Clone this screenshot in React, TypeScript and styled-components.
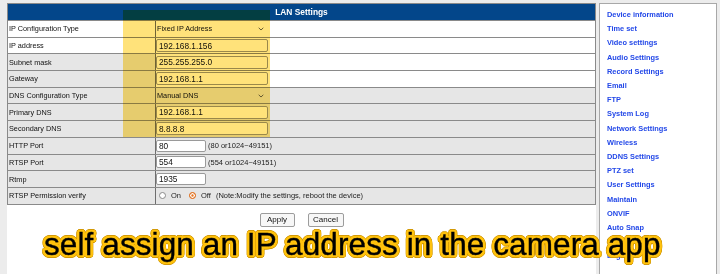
import React from "react";
import styled, { createGlobalStyle } from "styled-components";

const Global = createGlobalStyle`
  html, body { margin: 0; padding: 0; background: #ececec; }
  body {
    width: 720px; height: 274px; overflow: hidden;
    font-family: "Liberation Sans", Arial, sans-serif;
  }
  * { box-sizing: border-box; }
`;

const Page = styled.div`
  position: relative;
  display: flex;
  align-items: stretch;
  gap: 3px;
  padding: 3px 0 0 7px;
  height: 274px;
`;

const Main = styled.div`
  width: 589px;
  background: #fff;
  display: flex;
  flex-direction: column;
`;

const Table = styled.div`
  border: 1px solid #8a8a8a;
  display: flex;
  flex-direction: column;
`;

const Header = styled.div`
  height: 16px;
  background: #03468a;
  color: #fff;
  font-weight: bold;
  font-size: 8.4px;
  display: flex;
  align-items: center;
  justify-content: center;
`;

const Row = styled.div`
  height: 16.7px;
  border-top: 1px solid #8a8a8a;
  display: grid;
  grid-template-columns: 148px 1fr;
`;

const Label = styled.div<{ $gray?: boolean }>`
  background: ${(p) => (p.$gray ? "#e6e6e6" : "#fff")};
  border-right: 1px solid #6e6e6e;
  padding-left: 1px;
  font-size: 7.3px;
  color: #111;
  display: flex;
  align-items: center;
`;

const Value = styled.div<{ $gray?: boolean }>`
  background: ${(p) => (p.$gray ? "#e6e6e6" : "#fff")};
  display: flex;
  align-items: center;
  gap: 2px;
`;

const TextBox = styled.input<{ $small?: boolean }>`
  width: ${(p) => (p.$small ? "50px" : "112px")};
  height: ${(p) => (p.$small ? "12px" : "13px")};
  border: 1px solid #9a9a9a;
  border-radius: 2px;
  background: #fff;
  padding: 0 0 0 2px;
  margin: 0;
  font-family: "Liberation Sans", Arial, sans-serif;
  font-size: 8.3px;
  color: #111;
  outline: none;
`;

const SelectBox = styled.div`
  width: 112px;
  height: 13px;
  padding: 0 4px 0 1px;
  display: flex;
  align-items: center;
  justify-content: space-between;
  font-size: 7.3px;
  color: #111;
`;

const Hint = styled.span`
  font-size: 7.5px;
  color: #222;
  white-space: nowrap;
`;

const RadioGroup = styled.div`
  display: flex;
  align-items: center;
  padding-left: 3px;
  font-size: 7.5px;
  color: #222;
  white-space: nowrap;
`;

const Radio = styled.input`
  appearance: none;
  width: 7px;
  height: 7px;
  margin: 0 5px 0 0;
  border-radius: 50%;
  border: 1px solid #8a8a8a;
  background: #fff;
  &:checked {
    border-color: #e0701f;
    background: #e8731e;
    box-shadow: inset 0 0 0 1.3px #fff;
  }
`;

const RadioText = styled.span<{ $gap?: number }>`
  margin-right: ${(p) => p.$gap ?? 5}px;
`;

const Buttons = styled.div`
  display: flex;
  justify-content: center;
  gap: 13px;
  margin-top: 8px;
`;

const Button = styled.button<{ $w: number }>`
  width: ${(p) => p.$w}px;
  height: 14px;
  padding: 0;
  border: 1px solid #9c9c9c;
  border-radius: 2px;
  background: #f7f7f7;
  font-family: "Liberation Sans", Arial, sans-serif;
  font-size: 8px;
  color: #111;
`;

const Sidebar = styled.div`
  width: 118px;
  background: #fff;
  border: 1px solid #a8a8a8;
  border-bottom: none;
  padding: 4px 0 0 7px;
  display: flex;
  flex-direction: column;
`;

const NavLink = styled.a`
  display: block;
  line-height: 14.2px;
  font-size: 7.4px;
  font-weight: bold;
  color: #2348e8;
  text-decoration: none;
  white-space: nowrap;
`;

const Highlight = styled.div`
  position: absolute;
  left: 123px;
  top: 10px;
  width: 147px;
  height: 127px;
  background: #ffe27a;
  mix-blend-mode: multiply;
  pointer-events: none;
`;

const outline = (() => {
  const out: string[] = [];
  const n = 24;
  for (let i = 0; i < n; i++) {
    const a = (i / n) * Math.PI * 2;
    out.push(`${(Math.cos(a) * 2.4).toFixed(2)}px ${(Math.sin(a) * 2.4).toFixed(2)}px 0 #ffc20e`);
  }
  for (let i = 0; i < n; i++) {
    const a = (i / n) * Math.PI * 2;
    out.push(`${(Math.cos(a) * 3.1).toFixed(2)}px ${(Math.sin(a) * 3.1).toFixed(2)}px 0.5px #d39a08`);
  }
  return out.join(", ");
})();

const Caption = styled.div`
  position: absolute;
  left: 44px;
  top: 228.5px;
  font-family: "Liberation Sans", Arial, sans-serif;
  font-size: 31.5px;
  line-height: 31.5px;
  letter-spacing: 0.1px;
  color: #000;
  white-space: nowrap;
  -webkit-text-stroke: 0.35px #000;
  text-shadow: ${outline};
  pointer-events: none;
`;

const Chevron = () => (
  <svg width="6" height="4" viewBox="0 0 6 4">
    <path d="M0.7 0.8 L3 3 L5.3 0.8" fill="none" stroke="#555" strokeWidth="0.9" />
  </svg>
);

type RowSpec =
  | { label: string; lg?: boolean; vg?: boolean; kind: "select"; value: string }
  | { label: string; lg?: boolean; vg?: boolean; kind: "input"; value: string }
  | { label: string; lg?: boolean; vg?: boolean; kind: "port"; value: string; hint?: string }
  | { label: string; lg?: boolean; vg?: boolean; kind: "radio" };

const rows: RowSpec[] = [
  { label: "IP Configuration Type", kind: "select", value: "Fixed IP Address" },
  { label: "IP address", kind: "input", value: "192.168.1.156" },
  { label: "Subnet mask", lg: true, kind: "input", value: "255.255.255.0" },
  { label: "Gateway", lg: true, kind: "input", value: "192.168.1.1" },
  { label: "DNS Configuration Type", lg: true, vg: true, kind: "select", value: "Manual DNS" },
  { label: "Primary DNS", lg: true, vg: true, kind: "input", value: "192.168.1.1" },
  { label: "Secondary DNS", lg: true, vg: true, kind: "input", value: "8.8.8.8" },
  { label: "HTTP Port", lg: true, vg: true, kind: "port", value: "80", hint: "(80 or1024~49151)" },
  { label: "RTSP Port", lg: true, vg: true, kind: "port", value: "554", hint: "(554 or1024~49151)" },
  { label: "Rtmp", lg: true, vg: true, kind: "port", value: "1935" },
  { label: "RTSP Permission verify", lg: true, vg: true, kind: "radio" },
];

const links = [
  "Device information",
  "Time set",
  "Video settings",
  "Audio Settings",
  "Record Settings",
  "Email",
  "FTP",
  "System Log",
  "Network Settings",
  "Wireless",
  "DDNS Settings",
  "PTZ set",
  "User Settings",
  "Maintain",
  "ONVIF",
  "Auto Snap",
  "Reboot",
  "Logoff",
];

function renderValue(r: RowSpec) {
  switch (r.kind) {
    case "select":
      return (
        <SelectBox>
          <span>{r.value}</span>
          <Chevron />
        </SelectBox>
      );
    case "input":
      return <TextBox readOnly defaultValue={r.value} />;
    case "port":
      return (
        <>
          <TextBox $small readOnly defaultValue={r.value} />
          {r.hint && <Hint>{r.hint}</Hint>}
        </>
      );
    case "radio":
      return (
        <RadioGroup>
          <Radio type="radio" name="rtsp" readOnly />
          <RadioText $gap={8}>On</RadioText>
          <Radio type="radio" name="rtsp" defaultChecked />
          <RadioText>Off</RadioText>
          <span>(Note:Modify the settings, reboot the device)</span>
        </RadioGroup>
      );
  }
}

export default function App() {
  return (
    <>
      <Global />
      <Page>
        <Main>
          <Table>
            <Header>LAN Settings</Header>
            {rows.map((r) => (
              <Row key={r.label}>
                <Label $gray={r.lg}>{r.label}</Label>
                <Value $gray={r.vg}>{renderValue(r)}</Value>
              </Row>
            ))}
          </Table>
          <Buttons>
            <Button $w={35}>Apply</Button>
            <Button $w={36}>Cancel</Button>
          </Buttons>
        </Main>
        <Sidebar>
          {links.map((l) => (
            <NavLink key={l} href="#">
              {l}
            </NavLink>
          ))}
        </Sidebar>
        <Highlight />
        <Caption>self assign an IP address in the camera app</Caption>
      </Page>
    </>
  );
}
